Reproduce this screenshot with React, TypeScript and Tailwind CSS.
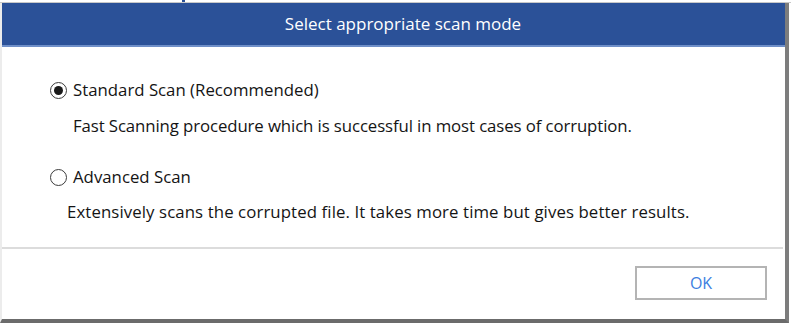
import React from 'react';

const Radio: React.FC<{ checked?: boolean }> = ({ checked }) => (
  <span className="w-[17px] h-[17px] rounded-full border-[1.5px] border-[#3c3c3c] bg-white flex items-center justify-center shrink-0">
    {checked && <span className="w-[9px] h-[9px] rounded-full bg-[#1a1a1a]" />}
  </span>
);

const App: React.FC = () => {
  return (
    <div className="w-[791px] h-[323px] bg-white overflow-hidden font-['Open_Sans',sans-serif] text-[#141414]">
      <div className="h-[3px] border-b border-[#c8c8c8] relative">
        <span className="absolute left-[182px] top-0 w-[3px] h-[2px] bg-[#2b5198]" />
      </div>
      <div className="h-[320px] mr-[2px] flex flex-col border-l-2 border-l-[#ececec] border-r-4 border-r-[#7d7d7d] border-b-4 border-b-[#6b6b6b]">
        <div className="h-[44px] bg-[#2b5198] border-b-2 border-b-[#6f8fc8] flex items-center justify-center pl-[19px] text-white text-[17px]">
          Select appropriate scan mode
        </div>
        <div className="flex-1 pt-[33px] pl-[48px] text-[16.8px] leading-[20px]">
          <label className="flex items-center gap-[6px]">
            <Radio checked />
            <span>Standard Scan (Recommended)</span>
          </label>
          <p className="mt-[16px] pl-[23px] tracking-[-0.1px]">
            Fast Scanning procedure which is successful in most cases of corruption.
          </p>
          <label className="mt-[31px] flex items-center gap-[6px]">
            <Radio />
            <span>Advanced Scan</span>
          </label>
          <p className="mt-[15px] pl-[17px] tracking-[0.1px]">
            Extensively scans the corrupted file. It takes more time but gives better results.
          </p>
        </div>
        <div className="h-[2px] bg-[#dcdcdc] mr-[2px]" />
        <div className="h-[70px] flex items-start justify-end pt-[17px] pr-[18px]">
          <button className="w-[132px] h-[34px] border-2 border-[#b4b4b4] bg-white text-[#3c7ee0] text-[16px]">
            OK
          </button>
        </div>
      </div>
    </div>
  );
};

export default App;
